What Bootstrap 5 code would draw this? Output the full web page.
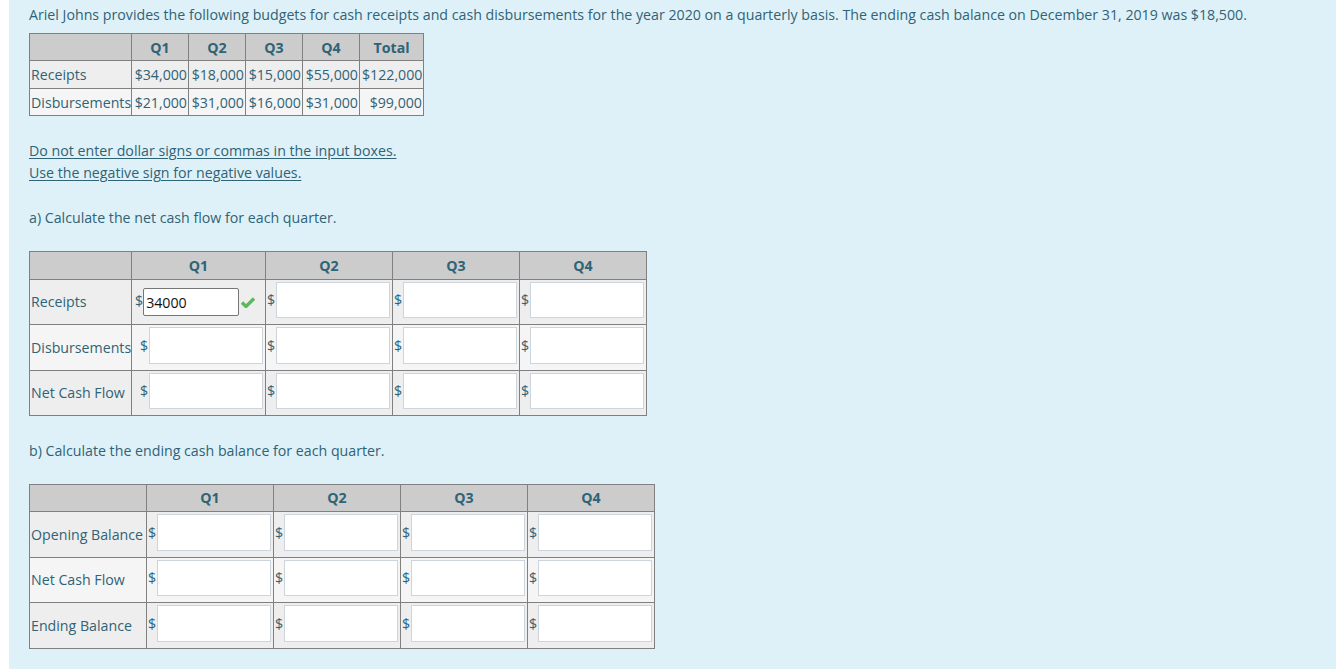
<!DOCTYPE html>
<html lang="en">
<head>
<meta charset="utf-8">
<title>Budget</title>
<link rel="stylesheet" href="https://cdn.jsdelivr.net/npm/bootstrap@5.3.0/dist/css/bootstrap.min.css">
<style>
html,body{height:100%;overflow:hidden}
body{background:#fff;font-family:"Open Sans","Noto Sans",sans-serif;font-size:14.2px;line-height:22px;color:#2f6376}
.sheet{margin-left:9px;background:#dff1f8;height:669px;padding:4px 0 0 20px;white-space:nowrap}
.sheet p{margin:0;line-height:22px}
.qtable{--bs-table-bg:transparent;--bs-table-color:#2f6376;--bs-table-border-color:#808080;border-color:#808080;color:#2f6376;margin:0;table-layout:fixed;border-collapse:collapse}
.qtable>:not(caption)>*>*{padding:0 2px;vertical-align:middle;color:#2f6376;box-shadow:none;border:1px solid #808080;line-height:20px}
.qtable>thead>tr>th{background:#ccc;text-align:center;font-weight:700;height:27px}
.qtable>tbody>tr:nth-child(odd)>td{background:#eee}
.qtable>tbody>tr:nth-child(even)>td{background:#f5f5f5}
.qtable>tbody>tr>td:first-child{padding-left:1px}
.qtable>tbody>tr>td.num{text-align:right;padding:0 1px 0 2px}
.tbl-a>thead>tr>th,.tbl-a>tbody>tr>td,.qtable.tbl-a>tbody>tr>td:first-child,.qtable.tbl-a>tbody>tr>td.num{padding-top:1px}
.qtable.tbl-b>thead>tr>th{height:28px}
.sheet .gap-a{margin-top:7px}
.sheet .gap-b{margin-top:24px}
.sheet .gap-c{margin-top:23px}
.sheet .gap-d{margin-top:24px}
.sheet .gap-e{margin-top:22px}
.sheet .gap-f{margin-top:22px}
.tbl-a{width:395px}.tbl-b{width:618px}.tbl-c{width:626px}
.row-s>td{height:27px}
.qtable .row-t>td{height:28px}
.row-m>td{height:45px}
.row-l>td{height:46px}
.w-102{width:102px}.w-117{width:117px}.w-57{width:57px}.w-64{width:64px}.w-127{width:127px}.w-134{width:134px}
.amt{display:flex;align-items:center;justify-content:flex-end;gap:1px;margin-bottom:4px}
.amt-start{justify-content:flex-start;padding-left:1px;margin-bottom:0}
.amt-start>span{transform:translateY(-1px)}
.box{width:114px;height:37px;background:#fff;border:1px solid #ced4dc;border-radius:0;padding:0 3px;font:inherit;outline:0;display:block}
.row-m .box{height:36px}
.row-m .box-done{width:96px;height:28px;border:1px solid #767676;border-radius:2px;color:#111;margin-left:-1px;padding-left:2px}
.tick{width:14px;height:11px;margin-left:1px;flex:none}
.under{text-decoration:underline;text-underline-offset:2px}
</style>
</head>
<body>
<main class="sheet">
<p>Ariel Johns provides the following budgets for cash receipts and cash disbursements for the year 2020 on a quarterly basis. The ending cash balance on December 31, 2019 was $18,500.</p>

<table class="table table-bordered qtable tbl-a gap-a">
<colgroup><col class="w-102"><col class="w-57"><col class="w-57"><col class="w-57"><col class="w-57"><col class="w-64"></colgroup>
<thead><tr><th></th><th>Q1</th><th>Q2</th><th>Q3</th><th>Q4</th><th>Total</th></tr></thead>
<tbody>
<tr class="row-t"><td>Receipts</td><td class="num">$34,000</td><td class="num">$18,000</td><td class="num">$15,000</td><td class="num">$55,000</td><td class="num">$122,000</td></tr>
<tr class="row-s"><td>Disbursements</td><td class="num">$21,000</td><td class="num">$31,000</td><td class="num">$16,000</td><td class="num">$31,000</td><td class="num">$99,000</td></tr>
</tbody>
</table>

<p class="under gap-b">Do not enter dollar signs or commas in the input boxes.</p>
<p class="under">Use the negative sign for negative values.</p>

<p class="gap-c">a) Calculate the net cash flow for each quarter.</p>

<table class="table table-bordered qtable tbl-b gap-e">
<colgroup><col class="w-102"><col class="w-134"><col class="w-127"><col class="w-127"><col class="w-127"></colgroup>
<thead><tr><th></th><th>Q1</th><th>Q2</th><th>Q3</th><th>Q4</th></tr></thead>
<tbody>
<tr class="row-m"><td>Receipts</td>
<td><div class="amt amt-start"><span>$</span><input class="box box-done" value="34000" aria-label="Q1 receipts"><svg class="tick" viewBox="0 0 14 11"><path d="M1 5.5 L5 9.5 L13 1.5" fill="none" stroke="#5cb85c" stroke-width="3.4"/></svg></div></td>
<td><div class="amt"><span>$</span><input class="box" aria-label="Q2 receipts"></div></td>
<td><div class="amt"><span>$</span><input class="box" aria-label="Q3 receipts"></div></td>
<td><div class="amt"><span>$</span><input class="box" aria-label="Q4 receipts"></div></td></tr>
<tr class="row-l"><td>Disbursements</td>
<td><div class="amt"><span>$</span><input class="box" aria-label="Q1 disbursements"></div></td>
<td><div class="amt"><span>$</span><input class="box" aria-label="Q2 disbursements"></div></td>
<td><div class="amt"><span>$</span><input class="box" aria-label="Q3 disbursements"></div></td>
<td><div class="amt"><span>$</span><input class="box" aria-label="Q4 disbursements"></div></td></tr>
<tr class="row-m"><td>Net Cash Flow</td>
<td><div class="amt"><span>$</span><input class="box" aria-label="Q1 net cash flow"></div></td>
<td><div class="amt"><span>$</span><input class="box" aria-label="Q2 net cash flow"></div></td>
<td><div class="amt"><span>$</span><input class="box" aria-label="Q3 net cash flow"></div></td>
<td><div class="amt"><span>$</span><input class="box" aria-label="Q4 net cash flow"></div></td></tr>
</tbody>
</table>

<p class="gap-d">b) Calculate the ending cash balance for each quarter.</p>

<table class="table table-bordered qtable tbl-c gap-f">
<colgroup><col class="w-117"><col class="w-127"><col class="w-127"><col class="w-127"><col class="w-127"></colgroup>
<thead><tr><th></th><th>Q1</th><th>Q2</th><th>Q3</th><th>Q4</th></tr></thead>
<tbody>
<tr class="row-l"><td>Opening Balance</td>
<td><div class="amt"><span>$</span><input class="box" aria-label="Q1 opening balance"></div></td>
<td><div class="amt"><span>$</span><input class="box" aria-label="Q2 opening balance"></div></td>
<td><div class="amt"><span>$</span><input class="box" aria-label="Q3 opening balance"></div></td>
<td><div class="amt"><span>$</span><input class="box" aria-label="Q4 opening balance"></div></td></tr>
<tr class="row-m"><td>Net Cash Flow</td>
<td><div class="amt"><span>$</span><input class="box" aria-label="Q1 net cash flow"></div></td>
<td><div class="amt"><span>$</span><input class="box" aria-label="Q2 net cash flow"></div></td>
<td><div class="amt"><span>$</span><input class="box" aria-label="Q3 net cash flow"></div></td>
<td><div class="amt"><span>$</span><input class="box" aria-label="Q4 net cash flow"></div></td></tr>
<tr class="row-l"><td>Ending Balance</td>
<td><div class="amt"><span>$</span><input class="box" aria-label="Q1 ending balance"></div></td>
<td><div class="amt"><span>$</span><input class="box" aria-label="Q2 ending balance"></div></td>
<td><div class="amt"><span>$</span><input class="box" aria-label="Q3 ending balance"></div></td>
<td><div class="amt"><span>$</span><input class="box" aria-label="Q4 ending balance"></div></td></tr>
</tbody>
</table>
</main>
<script src="https://cdn.jsdelivr.net/npm/bootstrap@5.3.0/dist/js/bootstrap.bundle.min.js"></script>
</body>
</html>
